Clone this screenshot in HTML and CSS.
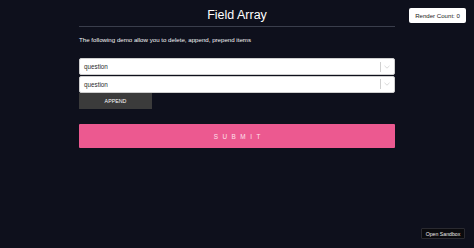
FILE: index.html
```html
<!DOCTYPE html>
<html>
<head>
<meta charset="utf-8">
<link rel="stylesheet" href="styles.css">
</head>
<body>
<button class="counter">Render Count: 0</button>
<main class="container">
  <h1 class="title">Field Array</h1>
  <p class="intro">The following demo allow you to delete, append, prepend items</p>
  <form class="form">
    <ul class="list">
      <li class="select">
        <span class="value">question</span>
        <span class="indicators">
          <span class="sep"></span>
          <svg class="chev" width="6" height="4" viewBox="0 0 6 4"><path d="M0.5 0.8 L3 3.2 L5.5 0.8" fill="none" stroke="#c8c8c8" stroke-width="0.7"/></svg>
        </span>
      </li>
      <li class="select">
        <span class="value">question</span>
        <span class="indicators">
          <span class="sep"></span>
          <svg class="chev" width="6" height="4" viewBox="0 0 6 4"><path d="M0.5 0.8 L3 3.2 L5.5 0.8" fill="none" stroke="#c8c8c8" stroke-width="0.7"/></svg>
        </span>
      </li>
    </ul>
    <button type="button" class="append">APPEND</button>
    <button type="submit" class="submit">SUBMIT</button>
  </form>
</main>
<button class="sandbox">Open Sandbox</button>
</body>
</html>
```
FILE: styles.css
```css
html, body {
  margin: 0;
  padding: 0;
}
body {
  background: #0e101c;
  font-family: "Liberation Sans", Arial, sans-serif;
  color: #fff;
  height: 248px;
  overflow: hidden;
}
.container {
  width: 316px;
  margin: 0 auto;
}
.title {
  margin: 0;
  padding: 8px 0 4px;
  font-size: 12.5px;
  line-height: 14px;
  font-weight: 400;
  text-align: center;
  border-bottom: 1px solid #3a3e4c;
}
.intro {
  margin: 9px 0 0;
  font-size: 6.15px;
  line-height: 7px;
  color: #f4f4f4;
}
.form {
  margin-top: 15px;
  display: flex;
  flex-direction: column;
  align-items: flex-start;
}
.list {
  list-style: none;
  margin: 0;
  padding: 0;
  width: 100%;
}
.select {
  height: 17px;
  background: #fff;
  border: 0.5px solid #cfcfcf;
  border-radius: 2px;
  box-sizing: border-box;
  display: flex;
  align-items: center;
  justify-content: space-between;
  padding-left: 4px;
  margin-bottom: 0.5px;
}
.value {
  font-size: 6.3px;
  color: #2a2a2a;
}
.indicators {
  display: flex;
  align-items: center;
  height: 100%;
}
.sep {
  width: 0.5px;
  height: 10px;
  background: #d0d0d0;
  margin-right: 4px;
}
.chev {
  display: block;
  margin-right: 4px;
}
.append {
  width: 73px;
  height: 16px;
  background: #3b3b3b;
  border: 0;
  color: #fff;
  font-family: "Liberation Sans", Arial, sans-serif;
  font-size: 5.3px;
  padding: 0;
}
.submit {
  margin-top: 15px;
  width: 100%;
  height: 24px;
  background: #ec5990;
  border: 0;
  border-radius: 1px;
  color: #fde2ed;
  font-family: "Liberation Sans", Arial, sans-serif;
  font-size: 6.4px;
  letter-spacing: 4.5px;
  text-indent: 4.5px;
  padding: 0;
}
.counter {
  position: absolute;
  top: 8px;
  right: 8px;
  width: 57px;
  height: 15px;
  background: #fff;
  border: 0;
  border-radius: 2px;
  color: #222;
  font-family: "Liberation Sans", Arial, sans-serif;
  font-size: 6.1px;
  padding: 0;
}
.sandbox {
  position: fixed;
  right: 9px;
  bottom: 9px;
  width: 44px;
  height: 11px;
  background: #0a0a0d;
  border: 0.5px solid #2a2a30;
  border-radius: 1px;
  color: #eee;
  font-family: "Liberation Sans", Arial, sans-serif;
  font-size: 5.2px;
  padding: 0;
}
```
